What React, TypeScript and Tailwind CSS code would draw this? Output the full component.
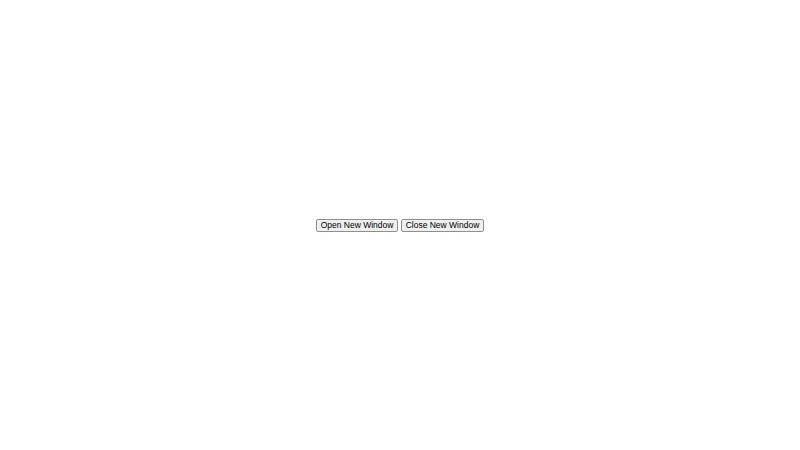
export default function App() {
  return (
    <div className="flex h-[450px] w-full items-center justify-center gap-[3px] bg-white pt-[1px] font-['Liberation_Sans',Arial,sans-serif]">
      <button className="h-[13.5px] rounded-[2px] border border-[#8f8f8f] bg-[#efefef] px-[3.6px] text-[8.5px] leading-[11px] text-black">
        Open New Window
      </button>
      <button className="h-[13.5px] rounded-[2px] border border-[#8f8f8f] bg-[#efefef] px-[3.6px] text-[8.5px] leading-[11px] text-black">
        Close New Window
      </button>
    </div>
  );
}
